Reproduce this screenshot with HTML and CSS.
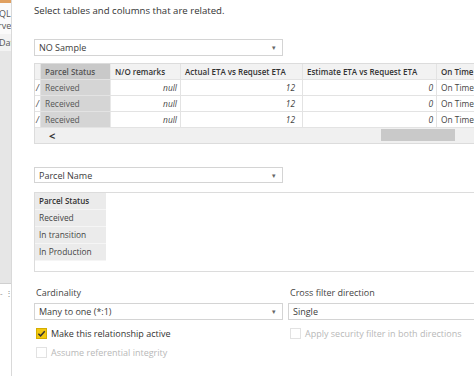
FILE: index.html
```html
<!DOCTYPE html>
<html>
<head>
<meta charset="utf-8">
<link rel="stylesheet" href="styles.css">
</head>
<body>
<div class="page">
  <aside class="side">
    <div class="side-top">
      <div class="side-accent"></div>
      <div class="side-t1">QL</div>
      <div class="side-t2">rve</div>
    </div>
    <div class="side-dat">Dat</div>
    <div class="side-gray"></div>
    <div class="side-dots">- &#8942;</div>
  </aside>
  <main class="main">
    <div class="title">Select tables and columns that are related.</div>

    <div class="select sel1"><span>NO Sample</span><span class="arrow">&#9662;</span></div>

    <div class="grid1">
      <div class="row head">
        <div class="c c0"></div>
        <div class="c c1 sel">Parcel Status</div>
        <div class="c c2">N/O remarks</div>
        <div class="c c3">Actual ETA vs Requset ETA</div>
        <div class="c c4">Estimate ETA vs Request ETA</div>
        <div class="c c5">On Time</div>
      </div>
      <div class="row">
        <div class="c c0 it">/</div>
        <div class="c c1 sel">Received</div>
        <div class="c c2 num it">null</div>
        <div class="c c3 num it">12</div>
        <div class="c c4 num it">0</div>
        <div class="c c5">On Time</div>
      </div>
      <div class="row">
        <div class="c c0 it">/</div>
        <div class="c c1 sel">Received</div>
        <div class="c c2 num it">null</div>
        <div class="c c3 num it">12</div>
        <div class="c c4 num it">0</div>
        <div class="c c5">On Time</div>
      </div>
      <div class="row">
        <div class="c c0 it">/</div>
        <div class="c c1 sel">Received</div>
        <div class="c c2 num it">null</div>
        <div class="c c3 num it">12</div>
        <div class="c c4 num it">0</div>
        <div class="c c5">On Time</div>
      </div>
      <div class="scroll">
        <span class="lt">&lt;</span>
        <span class="thumb"></span>
      </div>
    </div>

    <div class="select sel2"><span>Parcel Name</span><span class="arrow">&#9662;</span></div>

    <div class="grid2">
      <div class="col2">
        <div class="c2r bold">Parcel Status</div>
        <div class="c2r">Received</div>
        <div class="c2r">In transition</div>
        <div class="c2r">In Production</div>
      </div>
    </div>

    <div class="opts">
      <div class="optcol left">
        <div class="label">Cardinality</div>
        <div class="select"><span>Many to one (*:1)</span><span class="arrow">&#9662;</span></div>
        <div class="check on"><span class="box"><svg viewBox="0 0 10 10" width="9" height="9"><path d="M1.5 5.2 L4 7.6 L8.6 2.4" fill="none" stroke="#333" stroke-width="1.6"/></svg></span><span>Make this relationship active</span></div>
        <div class="check off"><span class="box"></span><span>Assume referential integrity</span></div>
      </div>
      <div class="optcol right">
        <div class="label">Cross filter direction</div>
        <div class="select wide"><span>Single</span></div>
        <div class="check off first"><span class="box"></span><span>Apply security filter in both directions</span></div>
      </div>
    </div>
  </main>
</div>
</body>
</html>
```

FILE: styles.css
```css
html, body {
  margin: 0;
  padding: 0;
  background: #ffffff;
  overflow: hidden;
}
body {
  width: 474px;
  height: 376px;
  font-family: "Open Sans", "Noto Sans", sans-serif;
  font-size: 9px;
  color: #333333;
}
.page {
  display: flex;
  width: 474px;
  height: 376px;
  overflow: hidden;
}
.side {
  width: 11px;
  flex: none;
  border-right: 1px solid #d9d9d9;
  display: flex;
  flex-direction: column;
  overflow: hidden;
  font-size: 9px;
  color: #555;
  white-space: nowrap;
}
.side-top {
  height: 34px;
  background: #fbfbfb;
}
.side-accent {
  height: 3px;
  background: #e0a060;
}
.side-t1 {
  margin-top: 5px;
  line-height: 12px;
  margin-left: -1px;
}
.side-t2 {
  line-height: 12px;
  margin-left: -2px;
}
.side-dat {
  height: 17px;
  background: #f3f3f3;
  line-height: 17px;
  margin-left: -1px;
}
.side-gray {
  height: 232px;
  background: #e6e6e6;
  border-bottom: 1px solid #d0d0d0;
}
.side-dots {
  line-height: 18px;
  color: #888;
  font-size: 8px;
}
.main {
  flex: 1;
  padding-left: 22px;
  min-width: 0;
}
.title {
  font-size: 9.6px;
  line-height: 14px;
  margin-top: 4px;
  color: #333;
  white-space: nowrap;
}
.select {
  box-sizing: border-box;
  width: 249px;
  height: 17px;
  border: 1px solid #d4d4d4;
  display: flex;
  align-items: center;
  justify-content: space-between;
  padding: 0 6px 0 4px;
  color: #3c3c3c;
  white-space: nowrap;
}
.arrow {
  font-size: 7px;
  color: #666;
}
.sel1 {
  margin-top: 21px;
}
.grid1 {
  margin-top: 7px;
  width: 460px;
  border: 1px solid #dcdcdc;
  border-right: none;
  box-sizing: border-box;
}
.row {
  display: flex;
  height: 16px;
  box-sizing: border-box;
  border-bottom: 1px solid #e3e3e3;
}
.c {
  flex: none;
  box-sizing: border-box;
  height: 15px;
  line-height: 15px;
  padding: 0 4px;
  border-right: 1px solid #e3e3e3;
  white-space: nowrap;
  overflow: hidden;
  color: #444;
  font-size: 8.4px;
}
.head .c {
  background: #f2f2f2;
  font-weight: 600;
  color: #333;
  font-size: 8px;
}
.head .c.sel {
  background: #c9c9c9;
}
.c.sel {
  background: #d5d5d5;
  color: #555;
  border-right-color: #e8e8e8;
}
.c0 { width: 6px; padding: 0 0 0 1px; }
.c1 { width: 70px; }
.c2 { width: 70px; }
.c3 { width: 122px; }
.c4 { width: 134px; }
.c5 { width: 60px; border-right: none; }
.num { text-align: right; padding-right: 3px; }
.it { font-style: italic; }
.c3.num { padding-right: 7px; }
.c4.num { padding-right: 3px; }
.scroll {
  height: 15px;
  background: #f0f0f0;
  display: flex;
  align-items: center;
  position: relative;
}
.lt {
  margin-left: 14px;
  font-weight: 700;
  font-size: 11px;
  color: #333;
}
.thumb {
  position: absolute;
  left: 346px;
  top: 1px;
  width: 74px;
  height: 12px;
  background: #c9c9c9;
}
.sel2 {
  margin-top: 23px;
  height: 16px;
}
.grid2 {
  margin-top: 9px;
  width: 460px;
  height: 80px;
  box-sizing: border-box;
  border: 1px solid #dcdcdc;
  border-right: none;
}
.col2 {
  width: 71px;
  background: #ebebeb;
}
.c2r {
  height: 16px;
  line-height: 16px;
  padding-left: 4px;
  border-bottom: 1px solid #f5f5f5;
  color: #444;
  white-space: nowrap;
  font-size: 8.4px;
}
.c2r.bold {
  font-weight: 600;
  color: #333;
  font-size: 8px;
}
.opts {
  display: flex;
  margin-top: 14px;
}
.optcol {
  display: flex;
  flex-direction: column;
}
.left {
  width: 254px;
  flex: none;
}
.right {
  flex: 1;
}
.label {
  line-height: 14px;
  padding-left: 2px;
  margin-bottom: 3px;
  color: #444;
  white-space: nowrap;
}
.wide {
  width: 200px;
  border-right: none;
}
.check {
  display: flex;
  align-items: center;
  height: 19px;
  padding-left: 2px;
  white-space: nowrap;
}
.box {
  box-sizing: border-box;
  width: 11px;
  height: 11px;
  margin-right: 4px;
  display: flex;
  align-items: center;
  justify-content: center;
}
.check.on .box {
  background: #f2c811;
  border: 1px solid #d4ad00;
}
.check.on {
  color: #333;
  margin-top: 4px;
}
.check.off {
  color: #b8b8b8;
}
.check.off .box {
  border: 1px solid #e2e2e2;
  background: #fff;
}
.check.off.first {
  margin-top: 4px;
}
```
